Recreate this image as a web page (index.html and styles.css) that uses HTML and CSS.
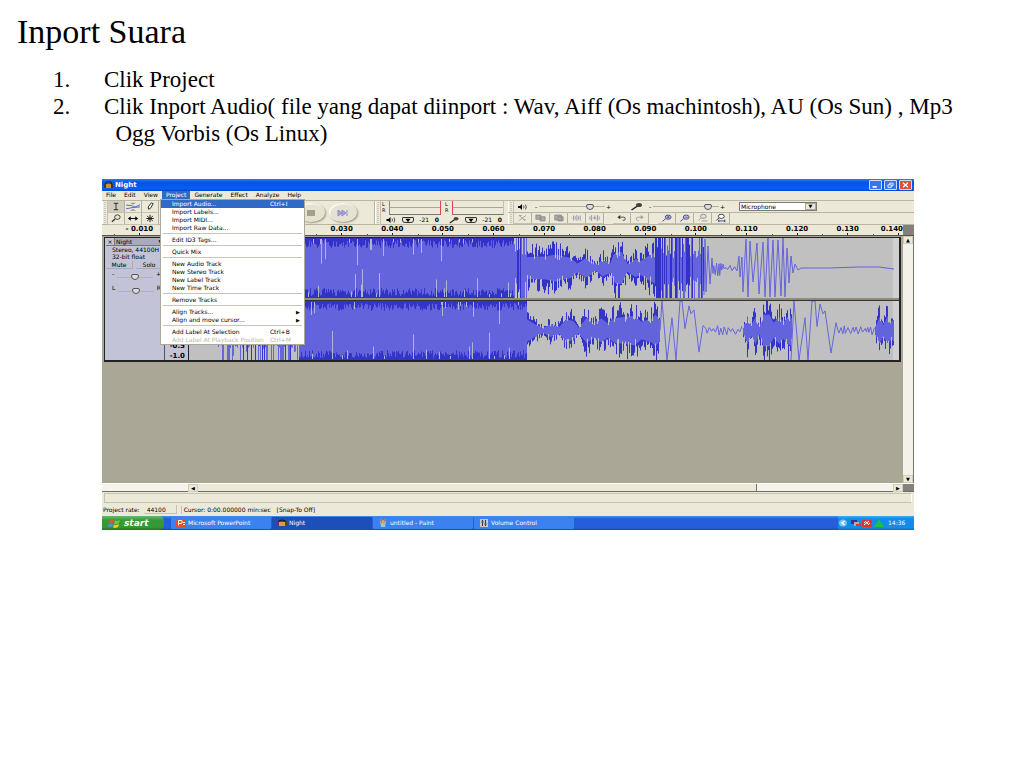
FILE: index.html
```html
<!doctype html>
<html lang="id">
<head>
    <meta charset="UTF-8">
    <title>Inport Suara</title>
    <link rel="stylesheet" href="styles.css">
</head>
<body>
<h1>Inport Suara</h1>
<ol class="steps">
    <li><span>1.</span><p>Clik Project</p></li>
    <li><span>2.</span><p>Clik Inport Audio( file yang dapat diinport : Wav, Aiff (Os machintosh), AU (Os Sun) , Mp3<br>&nbsp; Ogg Vorbis (Os Linux)</p></li>
</ol>

<div class="screen">
    <!-- title bar -->
    <div class="titlebar">
        <svg class="ico" viewBox="0 0 9 8"><path d="M1 4a3.500 3.500 0 0 1 7 0" fill="none" stroke="#222" /><path d="M1 3h7v4H1z" fill="#d98a2b"/><path d="M0 3h2v4H0zM7 3h2v4H7z" fill="#453344"/></svg>
        <b>Night</b>
        <button class="win" aria-label="Minimize"><svg viewBox="0 0 13 9"><path d="M3 7h5" stroke="#fff" stroke-width="2"/></svg></button>
        <button class="win" aria-label="Restore"><svg viewBox="0 0 13 9"><path d="M3.500 4.500h4v3h-4zM5.500 4V2.500h4v3H8" fill="none" stroke="#fff"/></svg></button>
        <button class="win close" aria-label="Close"><svg viewBox="0 0 13 9"><path d="M3.500 2l6 5.500M9.500 2l-6 5.500" stroke="#fff" stroke-width="1.500"/></svg></button>
    </div>

    <!-- menu bar -->
    <div class="menubar">
        <button>File</button>
        <button>Edit</button>
        <button>View</button>
        <div class="open">
            <button>Project</button>
            <div class="menu">
                <button class="hot">Import Audio...<i>Ctrl+I</i></button>
                <button>Import Labels...</button>
                <button>Import MIDI...</button>
                <button>Import Raw Data...</button>
                <hr>
                <button>Edit ID3 Tags...</button>
                <hr>
                <button>Quick Mix</button>
                <hr>
                <button>New Audio Track</button>
                <button>New Stereo Track</button>
                <button>New Label Track</button>
                <button>New Time Track</button>
                <hr>
                <button>Remove Tracks</button>
                <hr>
                <button class="sub">Align Tracks...</button>
                <button class="sub">Align and move cursor...</button>
                <hr>
                <button>Add Label At Selection<i>Ctrl+B</i></button>
                <button disabled>Add Label At Playback Position<i>Ctrl+M</i></button>
            </div>
        </div>
        <button>Generate</button>
        <button>Effect</button>
        <button>Analyze</button>
        <button>Help</button>
    </div>

    <!-- toolbars -->
    <div class="toolbars">
        <div class="grip"></div>
        <div class="tools">
            <button class="on" aria-label="Selection"><svg viewBox="0 0 17 12"><path d="M6 2.500h5M6 9.500h5M8.500 2.500v7" fill="none" stroke="#222"/></svg></button>
            <button aria-label="Envelope"><svg viewBox="0 0 17 12"><path d="M1 4.500q7 0 8 1.500t7-2M1 8.500q8-2 15-2" fill="none" stroke="#4a55d8"/><path d="M5 2h7L8.500 4zM5 10.500h7L8.500 8.500z" fill="#999"/></svg></button>
            <button aria-label="Draw"><svg viewBox="0 0 17 12"><path d="M7 9l-.5-2.500L10 2l2 1-3 5z" fill="#fff" stroke="#222"/></svg></button>
            <button aria-label="Zoom"><svg viewBox="0 0 17 12"><ellipse cx="10" cy="4.500" rx="3" ry="2.500" fill="none" stroke="#333"/><path d="M7.500 6.500L4 9.500" stroke="#333" stroke-width="1.500"/></svg></button>
            <button aria-label="Time shift"><svg viewBox="0 0 17 12"><path d="M4 6h9" stroke="#000"/><path d="M3 6l3-2.500v5zM14 6l-3-2.500v5z"/></svg></button>
            <button aria-label="Multi-tool"><svg viewBox="0 0 17 12"><path d="M8.500 2v8M4.500 6h8M5.500 3.500l6 5M11.500 3.500l-6 5" stroke="#111"/></svg></button>
        </div>
        <div class="transport">
            <button aria-label="Stop"><svg viewBox="0 0 28 20"><path d="M10 7h8v6h-8z" fill="#a5a08a"/></svg></button>
            <button aria-label="Skip to end"><svg viewBox="0 0 28 20"><path d="M9 7l4 3-4 3zM13 7l4 3-4 3zM18 7v6" fill="#a9a4d8" stroke="#8f88cc"/></svg></button>
        </div>
        <div class="grip"></div>
        <div class="meters">
            <div class="meter">
                <div class="lr"><span>L</span><span>R</span></div>
                <div class="bars"></div>
                <div class="scale">
                    <svg viewBox="0 0 9 8"><path d="M0 3h2l2-2v6L2 5H0z"/><path d="M5.500 2.500q1 1.500 0 3M7.500 1.500q1.500 2.500 0 5" fill="none" stroke="#555"/></svg>
                    <button class="drop" aria-label="Playback meter options"><svg viewBox="0 0 12 6"><path d="M3 1h6L6 5z"/></svg></button>
                    <span>-21</span><b>0</b>
                </div>
            </div>
            <div class="meter rec">
                <div class="lr"><span>L</span><span>R</span></div>
                <div class="bars"></div>
                <div class="scale">
                    <svg viewBox="0 0 12 9"><path d="M1 8l6-4" stroke="#222" stroke-width="1.500"/><ellipse cx="8.500" cy="3" rx="3" ry="2" fill="#444"/></svg>
                    <button class="drop" aria-label="Recording meter options"><svg viewBox="0 0 12 6"><path d="M3 1h6L6 5z"/></svg></button>
                    <span>-21</span><b>0</b>
                </div>
            </div>
        </div>
        <div class="right">
            <div class="mixer">
                <div class="grip"></div>
                <svg class="spk" viewBox="0 0 9 8"><path d="M0 3h2l2-2v6L2 5H0z"/><path d="M5.500 2.500q1 1.500 0 3M7.500 1.500q1.500 2.500 0 5" fill="none" stroke="#555"/></svg>
                <span class="range"><input type="range" min="0" max="100" value="82" aria-label="Output volume"></span>
                <svg class="mic" viewBox="0 0 12 9"><path d="M1 8l6-4" stroke="#222" stroke-width="1.500"/><ellipse cx="8.500" cy="3" rx="3" ry="2" fill="#444"/></svg>
                <span class="range"><input type="range" min="0" max="100" value="88" aria-label="Input volume"></span>
                <span class="source"><select aria-label="Input source"><option>Microphone</option></select></span>
            </div>
            <div class="edit">
                <div class="grip"></div>
                <button aria-label="Cut"><svg viewBox="0 0 18 12"><path d="M5 3l7 6M13 3L5 9M5 3h3M10 8h3" fill="none" stroke="#999"/></svg></button>
                <button aria-label="Copy"><svg viewBox="0 0 18 12"><path d="M3.500 2.500h6v5h-6zM8.500 4.500h6v5h-6z" fill="#aaa" stroke="#888"/></svg></button>
                <button aria-label="Paste"><svg viewBox="0 0 18 12"><path d="M4.500 2.500h8v6h-8zM8.500 4.500h6v5h-6z" fill="#aaa" stroke="#888"/></svg></button>
                <button aria-label="Trim"><svg viewBox="0 0 18 12"><path d="M3 6h1M5.500 3v6M7.500 4v4M9.500 2.500v7M11.500 4v4M13.500 3v6" stroke="#8c8ca8"/></svg></button>
                <button aria-label="Silence"><svg viewBox="0 0 18 12"><path d="M3.500 4v4M5.500 2.500v7M7 6h4M12.500 2.500v7M14.500 4v4M9.500 3v5" stroke="#8c8ca8"/></svg></button>
                <div class="gap"></div>
                <button aria-label="Undo"><svg viewBox="0 0 18 12"><path d="M6 5h5.500q2 0 2 2t-3 2" fill="none" stroke="#333"/><path d="M4 5l3.500-2.500v5z" fill="#333"/></svg></button>
                <button aria-label="Redo"><svg viewBox="0 0 18 12"><path d="M12 5H7q-2 0-2 2t3 2" fill="none" stroke="#999"/><path d="M14 5l-3.500-2.500v5z" fill="#999"/></svg></button>
                <div class="gap"></div>
                <button aria-label="Zoom in"><svg viewBox="0 0 18 12"><ellipse cx="11" cy="5" rx="3.500" ry="2.500" fill="#dde" stroke="#335"/><path d="M8 7l-4 3M9 5h4M11 3.500v3" stroke="#33a"/></svg></button>
                <button aria-label="Zoom out"><svg viewBox="0 0 18 12"><ellipse cx="11" cy="5" rx="3.500" ry="2.500" fill="#dde" stroke="#335"/><path d="M8 7l-4 3M9 5h4" stroke="#33a"/></svg></button>
                <button aria-label="Fit selection"><svg viewBox="0 0 18 12"><ellipse cx="10" cy="4" rx="3.500" ry="2.500" fill="#ddd" stroke="#888"/><path d="M7 6L4 9M8 9.500h7" stroke="#999"/></svg></button>
                <button aria-label="Fit project"><svg viewBox="0 0 18 12"><ellipse cx="10" cy="4" rx="3.500" ry="2.500" fill="#fff" stroke="#222"/><path d="M7 6L4 9" stroke="#222"/><path d="M6 9.500h9M7 8v3M14 8v3" stroke="#33a"/></svg></button>
            </div>
        </div>
    </div>

    <!-- time ruler -->
    <div class="ruler">
        <span>- 0.010</span><span></span><span></span><span></span><span>0.030</span><span>0.040</span><span>0.050</span><span>0.060</span><span>0.070</span><span>0.080</span><span>0.090</span><span>0.100</span><span>0.110</span><span>0.120</span><span>0.130</span><span class="last">0.140</span>
        <em></em>
    </div>

    <!-- tracks -->
    <div class="work">
        <div class="canvas">
            <div class="track">
                <div class="panel">
                    <div class="name"><button aria-label="Close track">×</button><button class="tname">Night<i>▼</i></button></div>
                    <p>Stereo, 44100H</p>
                    <p>32-bit float</p>
                    <div class="mutesolo"><button>Mute</button><button>Solo</button></div>
                    <div class="slide"><span>-</span><input type="range" value="50" aria-label="Gain"><span>+</span></div>
                    <div class="slide"><span>L</span><input type="range" value="50" aria-label="Pan"><span>R</span></div>
                </div>
                <div class="vruler">
                    <div></div>
                    <div><span>-0.5</span><span>-1.0</span></div>
                </div>
                <div class="waves">
                    <svg id="left" viewBox="0 -30 710 60" preserveAspectRatio="none"></svg>
                    <svg id="right" viewBox="0 -30 710 60" preserveAspectRatio="none"></svg>
                </div>
            </div>
        </div>
        <div class="vscroll"><button aria-label="Scroll up">▲</button><button aria-label="Scroll down">▼</button></div>
    </div>
    <div class="hscroll">
        <button aria-label="Scroll left">◀</button>
        <div class="thumb"></div>
        <button aria-label="Scroll right">▶</button>
        <em></em>
    </div>

    <!-- status bar -->
    <div class="message"></div>
    <div class="status">
        <label for="rate">Project rate:</label>
        <input id="rate" type="text" value="44100">
        <span>Cursor: 0:00.000000 min:sec &nbsp; [Snap-To Off]</span>
    </div>

    <!-- taskbar -->
    <div class="taskbar">
        <button class="start">
            <svg viewBox="0 0 13 11"><path d="M2 2q2-1.500 4 0L5 5Q3 4 1 5z" fill="#e8552c"/><path d="M7 2.500q2 1 5-.5l-1 3q-3 1.500-5 .5z" fill="#7cc444"/><path d="M1 6q2-1 4 0L4 9Q2 8 0 9z" fill="#4c8df0"/><path d="M6 6.500q2 1 5-.5l-1 3q-3 1.500-5 .5z" fill="#f5c52c"/></svg>
            start
        </button>
        <button class="task"><svg viewBox="0 0 10 8"><path d="M0 0h10v8H0z" fill="#d9532c"/><path d="M2.500 6.500v-5h3q1.500 1.500 0 3h-3M7 3.500h2M7 5.500h2" fill="none" stroke="#fff"/></svg>Microsoft PowerPoint</button>
        <button class="task active"><svg viewBox="0 0 10 8"><path d="M1 4a4 3 0 0 1 8 0" fill="none" stroke="#111"/><path d="M1 3h8v4H1z" fill="#e39a3c"/><path d="M0 3h2v4H0zM8 3h2v4H8z" fill="#703a2c"/></svg>Night</button>
        <button class="task"><svg viewBox="0 0 10 8"><path d="M2 2h6L7 8H3z" fill="#9cc4d8"/><path d="M3 0l1 4M7 0L5 5" stroke="#e86a3c" stroke-width="1.500"/><path d="M5 1v5" stroke="#e8d04c"/></svg>untitled - Paint</button>
        <button class="task"><svg viewBox="0 0 10 8"><path d="M1 0h8v8H1z" fill="#c8c8c0"/><path d="M3.500 1v6M6.500 1v6" stroke="#334"/><path d="M2 3h3M5 5h3" stroke="#667"/></svg>Volume Control</button>
        <div class="tray">
            <svg viewBox="0 0 46 10"><ellipse cx="5" cy="5" rx="4" ry="3.500" fill="#7cc0f8"/><path d="M6.500 3L4 5l2.500 2" fill="none" stroke="#fff" stroke-width="1.500"/><path d="M13 2h6v4h-6z" fill="#2c3c7c"/><path d="M16 4h5v4h-5z" fill="#aac"/><path d="M18 7h5" stroke="#d33" stroke-width="2"/><path d="M24 2h10v7H24z" fill="#d8323c"/><path d="M26 5q2-3 3 0t3 0M26 7l5-4" fill="none" stroke="#fff"/><path d="M36 9h10L41 1z" fill="#1fc040"/></svg>
            14:36
        </div>
    </div>
</div>
<script src="waveform.js"></script>
</body>
</html>
```
FILE: styles.css
```css
* {
    margin: 0;
    padding: 0;
    box-sizing: border-box;
}

body {
    background-color: #fff;
    color: #000;
    font-family: "Liberation Serif", "Times New Roman", serif;
}

h1 {
    margin: 12px 17px 0;
    font-size: 34px;
    line-height: 40px;
    font-weight: normal;
}

.steps {
    margin: 14px 53px 32px;
    list-style: none;
    font-size: 23px;
    line-height: 27px;
}

.steps li {
    display: flex;
}

.steps span {
    flex: 0 0 51px;
}

.steps p {
    white-space: nowrap;
}

/* desktop */
.screen {
    margin: 0 110px 0 102px;
    background-color: #ece9d8;
    font-family: "DejaVu Sans", Verdana, sans-serif;
    font-size: 6px;
    line-height: 8px;
}

button, input, select {
    border: 0;
    background: none;
    color: inherit;
    font: inherit;
}

i {
    font-style: normal;
}

svg {
    display: block;
}

.titlebar {
    display: flex;
    align-items: center;
    gap: 2px;
    height: 12px;
    padding: 0 2px;
    background: linear-gradient(#2a7cf4, #0453e0 30%, #0560f8 80%, #0346c8);
    color: #fff;
    font-size: 7px;
}

.titlebar .ico {
    width: 9px;
    height: 8px;
}

.titlebar b {
    flex: 1;
}

.win {
    width: 13px;
    height: 10px;
    border: 1px solid #cfdcf8;
    border-radius: 1px;
    background-color: #3a74ec;
}

.win svg {
    width: 100%;
}

.win.close {
    background-color: #dc5034;
}

.menubar {
    display: flex;
    height: 9px;
}

.menubar button {
    padding: 0 4px;
    height: 8px;
    line-height: 8px;
    white-space: nowrap;
}

.open {
    position: relative;
}

.open > button {
    background-color: #316ac5;
    color: #fff;
}

.menu {
    position: absolute;
    left: -2px;
    top: 8px;
    z-index: 10;
    width: 145px;
    border: 1px solid #aca899;
    background-color: #fff;
}

.menu button {
    display: flex;
    width: 100%;
    padding: 0 4px 0 11px;
    text-align: left;
}

.menu i {
    margin-left: auto;
    width: 30px;
}

.menu .hot {
    background-color: #316ac5;
    color: #fff;
}

.menu .sub::after {
    content: "▶";
    margin-left: auto;
    font-size: 5px;
}

.menu button:disabled {
    color: #bbb8aa;
}

.menu hr {
    margin: 1px 2px 2px;
    border: 0;
    border-top: 1px solid #c8c5b8;
}

.toolbars {
    display: flex;
    height: 25px;
    border-top: 1px solid #b8b5a4;
    border-bottom: 1px solid #b8b5a4;
}

.grip {
    width: 6px;
    border-left: 1px solid #fff;
    border-right: 1px solid #c4c1b0;
    background: repeating-linear-gradient(#ece9d8 0 1px, #c9c6b6 1px 2px);
    background-size: 2px 100%;
    background-repeat: no-repeat;
    background-position: center;
}

.tools {
    display: grid;
    grid-template-columns: repeat(3, 17px);
}

.tools button, .edit button {
    border-right: 1px solid #b4b1a0;
    border-bottom: 1px solid #c4c1b0;
}

.tools .on {
    background-color: #d0cdbd;
}

.tools svg {
    width: 16px;
    height: 11px;
}

.transport {
    display: flex;
    align-items: center;
    justify-content: flex-end;
    gap: 4px;
    width: 216px;
    padding-right: 17px;
    border-right: 1px solid #b4b1a0;
}

.transport button {
    width: 28px;
    height: 19px;
    border-radius: 50%;
    background-color: #e6e2d2;
    box-shadow: inset 1px 1px 1px #fff, 1px 1px 2px #98957f;
}

.meters {
    display: flex;
    gap: 4px;
    padding: 0 4px 0 1px;
}

.meter {
    display: grid;
    grid-template: 14px 9px / 7px 52px;
}

.lr {
    font-size: 5px;
    line-height: 6px;
}

.lr span {
    display: block;
}

.bars {
    border-left: 1px solid #888;
    border-right: 1px solid #e04058;
    border-bottom: 1px solid #777;
    background: linear-gradient(transparent 6px, #aaa796 6px 7px, transparent 7px);
}

.rec .bars {
    border-left-color: #e04058;
    border-right-color: #c4c1b0;
}

.scale {
    grid-column: 1 / 3;
    display: flex;
    align-items: center;
    justify-content: space-between;
    padding: 0 2px 0 4px;
}

.scale > svg {
    width: 10px;
    height: 8px;
}

.drop {
    width: 12px;
    height: 6px;
    border: 1px solid #333;
    border-radius: 1px 1px 3px 3px;
}

.right {
    flex: 1;
}

.mixer, .edit {
    display: flex;
    height: 12px;
    align-items: center;
}

.mixer {
    border-bottom: 1px solid #b8b5a4;
}

.mixer .grip, .edit .grip {
    align-self: stretch;
}

.edit {
    height: 11px;
}

.spk {
    width: 9px;
    height: 8px;
    margin: 0 8px 0 4px;
}

.mic {
    width: 13px;
    height: 9px;
    margin: 0 6px 0 19px;
}

.range {
    display: flex;
    width: 76px;
    justify-content: space-between;
}

.range::before {
    content: "-";
}

.range::after {
    content: "+";
}

input[type=range] {
    appearance: none;
    -webkit-appearance: none;
    height: 8px;
    width: 66px;
    background: linear-gradient(#b5b2a2, #b5b2a2) center / 100% 1px no-repeat;
}

input[type=range]::-webkit-slider-thumb {
    -webkit-appearance: none;
    width: 8px;
    height: 6px;
    border: 1px solid #555;
    border-radius: 2px 2px 4px 4px;
    background-color: #dcdce4;
}

.source {
    display: flex;
    width: 78px;
    height: 9px;
    margin-left: 14px;
    border: 1px solid #7b7a70;
    background-color: #fff;
}

.source select {
    flex: 1;
    padding-left: 1px;
    appearance: none;
    -webkit-appearance: none;
}

.source::after {
    content: "▼";
    width: 9px;
    background-color: #ece9d8;
    border: 1px solid #aca899;
    font-size: 5px;
    line-height: 5px;
    text-align: center;
}

.edit button {
    width: 18px;
    height: 11px;
}

.edit svg {
    width: 17px;
    height: 10px;
}

.edit .gap {
    width: 9px;
}

/* time ruler */
.ruler {
    display: grid;
    grid-template-columns: repeat(15, 1fr) 30px 11px;
    height: 11px;
    padding-left: 12px;
    border-bottom: 1px solid #55534a;
    font-size: 7px;
    font-weight: bold;
    line-height: 8px;
    text-align: center;
}

.ruler span {
    background: linear-gradient(#222, #222) 50% 100% / 1px 2px no-repeat, linear-gradient(#555, #555) 0 100% / 1px 1px no-repeat;
}

.ruler .last {
    text-align: right;
    background-position: 25px 100%, 0 100%;
}

.ruler em {
    background-color: #83817a;
}

/* tracks */
.work {
    display: flex;
    height: 247px;
}

.canvas {
    flex: 1;
    padding: 1px 2px;
    background-color: #aaa797;
}

.track {
    display: flex;
    border: 1px solid #222;
    border-width: 1px 2px 2px 1px;
}

.panel {
    width: 60px;
    padding: 0 1px;
    background-color: #c2c3d6;
    border-right: 1px solid #555;
    line-height: 7px;
    overflow: hidden;
}

.panel p {
    padding-left: 6px;
    white-space: nowrap;
}

.name {
    display: flex;
    height: 8px;
    border-bottom: 1px solid #777;
}

.name button {
    line-height: 7px;
    width: 9px;
    border-right: 1px solid #777;
}

.name .tname {
    display: flex;
    flex: 1;
    justify-content: space-between;
    padding-left: 1px;
    border: 0;
    background-color: #a9aac0;
}

.mutesolo {
    display: flex;
    gap: 3px;
    margin: 1px 0;
}

.mutesolo button {
    flex: 1;
    line-height: 7px;
    border: 1px solid #aaaabc;
    border-width: 0 1px 1px 0;
}

.slide {
    display: flex;
    justify-content: space-between;
    height: 14px;
    padding: 0 2px 0 6px;
}

.slide input[type=range] {
    align-self: center;
    width: 36px;
}

.vruler {
    width: 24px;
    background-color: #c2c3d6;
    font-size: 7px;
    font-weight: bold;
    text-align: right;
    border-right: 1px solid #222;
}

.vruler div {
    display: flex;
    flex-direction: column;
    justify-content: flex-end;
    gap: 2px;
    height: 61px;
    padding-right: 3px;
}

.vruler div + div {
    border-top: 1px solid #222;
}

.waves {
    flex: 1;
    display: grid;
    gap: 2px;
    background-color: #8f8c7c;
}

.waves svg {
    width: 100%;
    height: 60px;
    background: linear-gradient(to left, #d0d0d0 6px, #c0c0c0 6px);
}

.waves svg + svg {
    border-top: 1px solid #333;
}

.peak {
    fill: none;
    stroke: #3232c8;
}

.rms {
    fill: none;
    stroke: #6464dc;
}

.cut {
    fill: none;
    stroke: #b4b4d0;
}

.vscroll {
    display: flex;
    flex-direction: column;
    justify-content: space-between;
    width: 11px;
    background-color: #f3f1e8;
    border-right: 1px solid #77756a;
}

.vscroll button, .hscroll button {
    font-size: 5px;
    line-height: 7px;
    height: 8px;
    width: 10px;
    background-color: #ece9d8;
    border: 1px solid #d0cdbd;
}

.hscroll {
    display: flex;
    height: 9px;
    padding-left: 86px;
    border-top: 1px solid #fff;
    border-bottom: 1px solid #6f6d60;
    background-color: #f5f3ea;
}

.hscroll .thumb {
    width: 77%;
    background-color: #ece9d8;
    border-right: 1px solid #77756a;
    margin-right: auto;
}

.hscroll em {
    width: 11px;
    background-color: #83817a;
}

.message {
    height: 10px;
    margin: 1px 2px 0;
    border: 1px solid #c6c3b2;
    border-right-color: #fff;
}

.status {
    display: flex;
    align-items: center;
    height: 13px;
    padding-left: 1px;
}

.status input {
    width: 33px;
    height: 9px;
    margin: 0 4px;
    padding-left: 3px;
    border-right: 1px solid #c6c3b2;
    border-bottom: 1px solid #c6c3b2;
}

.status span {
    flex: 1;
    padding-left: 2px;
    border-left: 1px solid #c6c3b2;
}

/* taskbar */
.taskbar {
    display: flex;
    height: 14px;
    background: linear-gradient(#4a8cf0, #245edb 20%, #245edb 85%, #1a48a8);
    color: #fff;
}

.start {
    display: flex;
    align-items: center;
    gap: 3px;
    width: 62px;
    margin-right: 7px;
    padding-left: 6px;
    border-radius: 0 5px 5px 0;
    background: linear-gradient(#6cb86c, #389838 30%, #389838 80%, #287028);
    font-size: 9px;
    font-weight: bold;
    font-style: italic;
}

.start svg {
    width: 13px;
    height: 11px;
}

.task {
    display: flex;
    align-items: center;
    gap: 2px;
    width: 100px;
    height: 12px;
    margin: 1px 1px 0 0;
    padding-left: 5px;
    border-radius: 1px;
    background-color: #3c81f0;
}

.task svg {
    width: 10px;
    height: 8px;
}

.task.active {
    background-color: #1d4fb8;
}

.tray {
    display: flex;
    align-items: center;
    gap: 4px;
    width: 76px;
    margin-left: auto;
    background: linear-gradient(#3cb0f4, #128ce8 20%, #128ce8 85%, #0c68b8);
}

.tray svg {
    width: 46px;
    height: 10px;
}
```
FILE: waveform.js
```js
var seed = 7;

function rnd() {
    seed = (seed * 16807) % 2147483647;
    return seed / 2147483647;
}

function addPath(svg, cls, d) {
    var p = document.createElementNS("http://www.w3.org/2000/svg", "path");
    p.setAttribute("class", cls);
    p.setAttribute("d", d);
    svg.appendChild(p);
}

function bar(x, top, bottom) {
    return "M" + (x + 0.5) + " " + top.toFixed(1) + "V" + bottom.toFixed(1);
}

// clipped part: the signal fills the whole channel
function full(svg, from, to) {
    var peak = "", rms = "", cut = "";
    for (var x = from; x < to; x++) {
        peak += bar(x, -30, 30);
        rms += bar(x, -28 + rnd() * 8, 28 - rnd() * 8);
        if (rnd() < 0.14) {
            cut += rnd() < 0.5 ? bar(x, -29, -26 + rnd() * rnd() * 30) : bar(x, 26 - rnd() * rnd() * 30, 29);
        }
    }
    addPath(svg, "peak", peak);
    addPath(svg, "rms", rms);
    addPath(svg, "cut", cut);
}

// list of [x, amplitude], noise between the points
function noise(svg, points) {
    var peak = "", rms = "";
    for (var i = 0; i < points.length - 1; i++) {
        var a = points[i], b = points[i + 1];
        for (var x = a[0]; x < b[0]; x++) {
            var amp = a[1] + (b[1] - a[1]) * (x - a[0]) / (b[0] - a[0]);
            var up = amp * (0.3 + rnd() * 0.8), down = amp * (0.3 + rnd() * 0.8);
            peak += bar(x, -Math.min(up, 30), Math.min(down, 30));
            rms += bar(x, -Math.min(up, amp * 0.5), Math.min(down, amp * 0.5));
        }
    }
    addPath(svg, "peak", peak);
    addPath(svg, "rms", rms);
}

// high bars with gaps of background between them
function comb(svg, from, to, density) {
    var peak = "", rms = "";
    for (var x = from; x < to; x++) {
        if (rnd() < density) {
            var t = rnd() < 0.7 ? -30 : -12 - rnd() * 14;
            var b = rnd() < 0.7 ? 30 : 12 + rnd() * 14;
            if (rnd() < 0.4) {
                peak += bar(x, t, b);
            } else {
                rms += bar(x, t, b);
            }
        } else {
            rms += bar(x, -8 - rnd() * 10, 8 + rnd() * 10);
        }
    }
    addPath(svg, "peak", peak);
    addPath(svg, "rms", rms);
}

function line(svg, points) {
    addPath(svg, "rms", "M" + points.join("L"));
}

function ripple(from, to, amp, step) {
    var out = [];
    for (var x = from, s = 1; x < to; x += step * (0.5 + rnd()), s = -s) {
        out.push([x.toFixed(1), (s * amp * (0.1 + rnd() * 0.9)).toFixed(1)]);
    }
    return out;
}

var left = document.getElementById("left");
comb(left, 26, 110, 0.7);
full(left, 110, 325);
comb(left, 325, 338, 0.75);
noise(left, [[338, 22], [356, 23], [366, 27], [381, 20], [388, 9], [396, 19], [403, 12], [407, 6], [413, 17], [421, 10], [424, 26],
    [427, 32], [432, 32], [438, 8], [446, 18], [451, 14], [459, 24], [466, 32]]);
comb(left, 466, 515, 0.8);
line(left, [[515, 27], [516, -29], [517, 24], [519, -22], [521, 16], [523, -10]].concat(ripple(524, 535, 9, 1), ripple(535, 547, 3, 2),
    [[548, 3], [550, -12], [551, 9], [553, -11], [554, 24], [557, -29], [559, 29], [561, -27], [564, 14], [568, -25], [570, 26],
        [574, -26], [576, 29], [579, -30], [581, 29], [584, -28], [586, 29], [589, -28], [592, 28], [594, -30], [596, 29],
        [598, -20], [600, 15], [602, -12], [604, 5], [606, -4], [609, 2], [612, 0], [640, 0], [670, -1], [690, -1], [705, 1]]));

var right = document.getElementById("right");
comb(right, 26, 110, 0.6);
full(right, 110, 338);
noise(right, [[338, 22], [346, 12], [354, 5], [361, 13], [370, 8], [377, 23], [384, 19], [389, 6], [397, 25], [404, 16], [412, 24],
    [418, 15], [425, 25], [445, 30], [452, 18], [462, 24], [466, 32], [471, 20]]);
line(right, [[471, 0], [473, -30], [478, 30], [483, -13], [487, 30], [491, -30], [493, -30], [496, -2], [500, -25], [502, -17],
    [505, -21], [510, 22], [514, -5], [517, -2]].concat(ripple(518, 554, 5, 2)));
noise(right, [[554, 8], [558, 27], [562, 12], [566, 27], [570, 9], [574, 32], [580, 32], [584, 16], [590, 27], [594, 17], [598, 27], [601, 30], [603, 20]]);
line(right, [[602, 30], [605, -30], [610, 30], [616, -13], [619, 30], [623, -30], [626, -30], [628, -4], [631, -27], [634, -17],
    [636, -20], [642, 23], [647, -8], [649, 0]].concat(ripple(650, 686, 5, 2)));
noise(right, [[686, 8], [690, 26], [694, 12], [698, 28], [702, 18], [705, 24]]);
```
